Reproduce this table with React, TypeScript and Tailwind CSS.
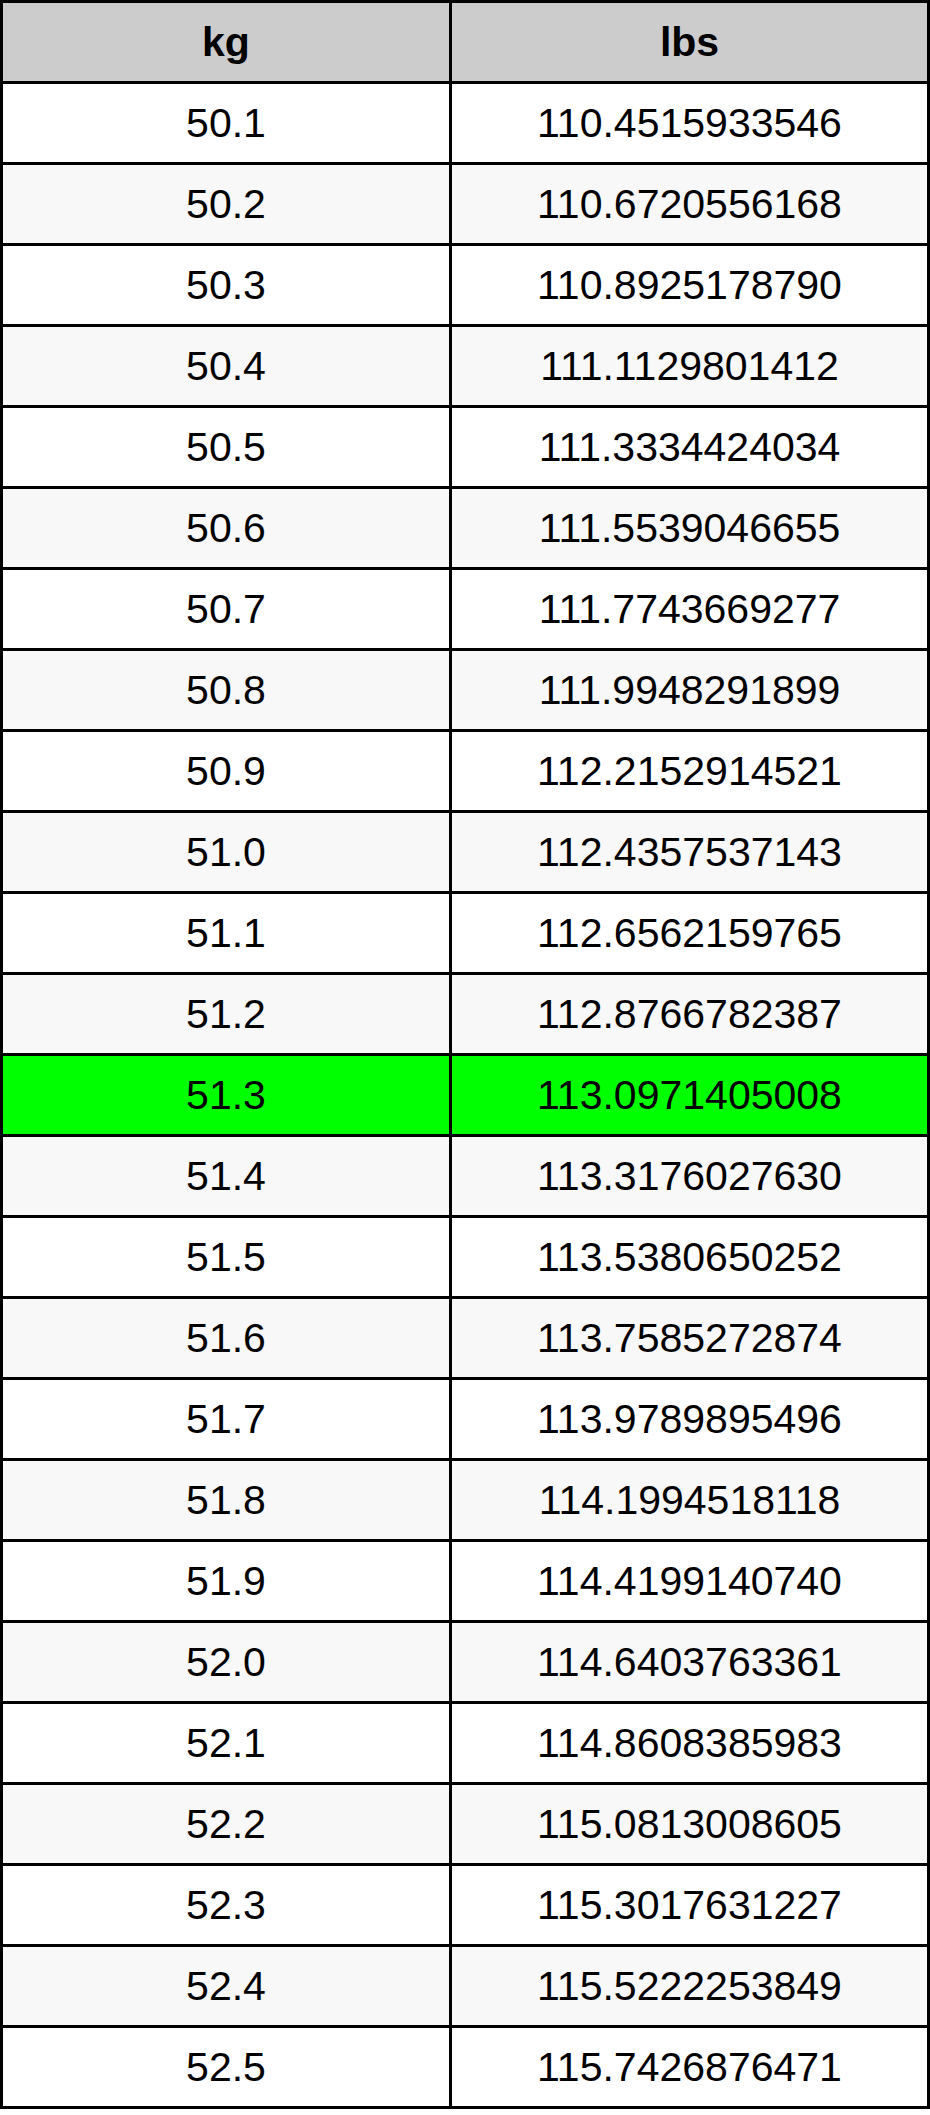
import React from "react";

const rows: [string, string][] = [
  ["50.1", "110.4515933546"],
  ["50.2", "110.6720556168"],
  ["50.3", "110.8925178790"],
  ["50.4", "111.1129801412"],
  ["50.5", "111.3334424034"],
  ["50.6", "111.5539046655"],
  ["50.7", "111.7743669277"],
  ["50.8", "111.9948291899"],
  ["50.9", "112.2152914521"],
  ["51.0", "112.4357537143"],
  ["51.1", "112.6562159765"],
  ["51.2", "112.8766782387"],
  ["51.3", "113.0971405008"],
  ["51.4", "113.3176027630"],
  ["51.5", "113.5380650252"],
  ["51.6", "113.7585272874"],
  ["51.7", "113.9789895496"],
  ["51.8", "114.1994518118"],
  ["51.9", "114.4199140740"],
  ["52.0", "114.6403763361"],
  ["52.1", "114.8608385983"],
  ["52.2", "115.0813008605"],
  ["52.3", "115.3017631227"],
  ["52.4", "115.5222253849"],
  ["52.5", "115.7426876471"],
];

export default function App() {
  return (
    <div
      className="w-[930px] bg-white text-black"
      style={{ fontFamily: '"Liberation Sans", Arial, sans-serif' }}
    >
      <div className="grid grid-cols-[449px_478px] border-l-[3px] border-t-[3px] border-black">
        <div className="h-[81px] border-r-[3px] border-b-[3px] border-black bg-[#cccccc] flex items-center justify-center text-[41px] font-bold leading-none">
          kg
        </div>
        <div className="h-[81px] border-r-[3px] border-b-[3px] border-black bg-[#cccccc] flex items-center justify-center text-[41px] font-bold leading-none">
          lbs
        </div>
        {rows.map(([kg, lbs], i) => {
          const bg =
            kg === "51.3"
              ? "bg-[#00ff00]"
              : i % 2 === 1
              ? "bg-[#f8f8f8]"
              : "bg-white";
          return (
            <React.Fragment key={kg}>
              <div
                className={`h-[81px] border-r-[3px] border-b-[3px] border-black flex items-center justify-center text-[41px] leading-none ${bg}`}
              >
                {kg}
              </div>
              <div
                className={`h-[81px] border-r-[3px] border-b-[3px] border-black flex items-center justify-center text-[41px] leading-none ${bg}`}
              >
                {lbs}
              </div>
            </React.Fragment>
          );
        })}
      </div>
    </div>
  );
}
